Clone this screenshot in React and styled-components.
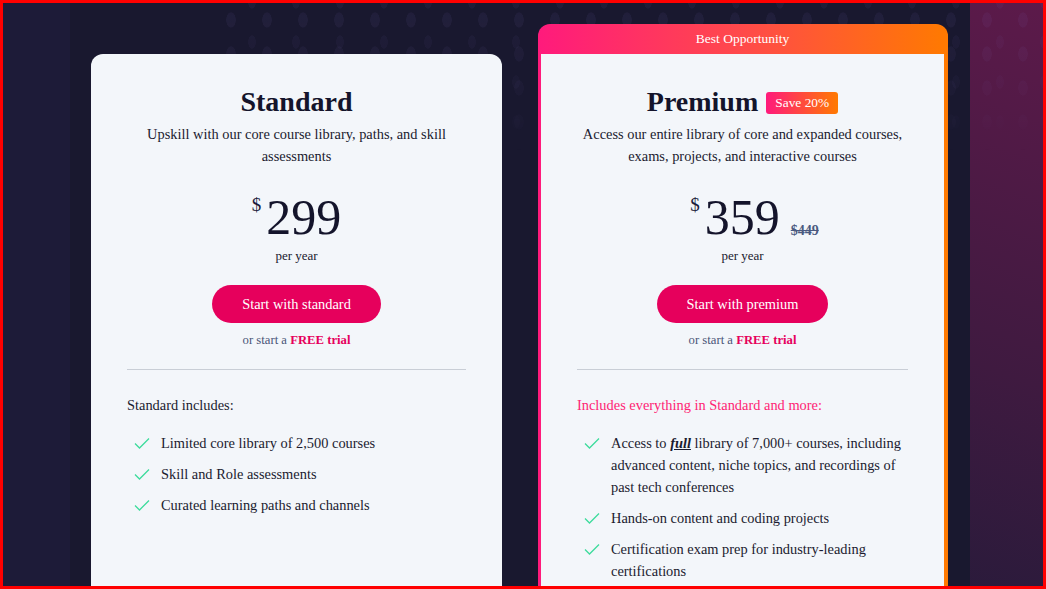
import React from 'react';
import styled, { createGlobalStyle } from 'styled-components';

const GlobalStyle = createGlobalStyle`
  html, body {
    margin: 0;
    padding: 0;
    height: 100%;
  }
  body {
    font-family: "Liberation Serif", "Times New Roman", serif;
    color: #1a1a2e;
  }
  * { box-sizing: border-box; }
`;

const Page = styled.div`
  position: relative;
  width: 100vw;
  height: 100vh;
  overflow: hidden;
  border: 3px solid #ff0000;
  background:
    linear-gradient(to right, #1d1b38 0 67px, #19182f 67px 967px, transparent 967px),
    linear-gradient(200deg, #5c1a4a 0%, #3f1a40 40%, #1d1b38 80%);
`;

const Dots = styled.div`
  position: absolute;
  top: 0;
  left: 210px;
  width: 830px;
  height: 150px;
  background-image:
    radial-gradient(ellipse 5px 8px, rgba(130, 110, 190, 0.09) 90%, transparent 100%),
    radial-gradient(ellipse 4px 7px, rgba(130, 110, 190, 0.07) 90%, transparent 100%);
  background-size: 36px 34px, 44px 40px;
  background-position: 0 0, 17px 19px;
  -webkit-mask-image: linear-gradient(to bottom, #000 0%, rgba(0, 0, 0, 0.6) 50%, transparent 100%);
  mask-image: linear-gradient(to bottom, #000 0%, rgba(0, 0, 0, 0.6) 50%, transparent 100%);
`;

const Cards = styled.div`
  position: relative;
  display: flex;
  align-items: flex-start;
  gap: 36px;
  padding: 21px 0 0 88px;
`;

const Card = styled.div`
  width: 411px;
  margin-top: 30px;
  background: #f3f6fa;
  border-radius: 12px;
  padding: 31px 36px 40px;
  min-height: 600px;
`;

const FeaturedFrame = styled.div`
  width: 410px;
  border-radius: 12px 12px 0 0;
  background: linear-gradient(to right, #ff1a7c, #ff4a4a 50%, #ff7a00);
  padding: 0 4px 0 3px;
`;

const Ribbon = styled.div`
  height: 30px;
  display: flex;
  align-items: center;
  justify-content: center;
  color: #fff;
  font-size: 13.5px;
`;

const FeaturedBody = styled.div`
  background: #f3f6fa;
  padding: 31px 36px 40px;
  min-height: 600px;
`;

const TitleRow = styled.div`
  display: flex;
  align-items: center;
  justify-content: center;
  gap: 8px;
`;

const Title = styled.h2`
  margin: 0;
  font-size: 28px;
  line-height: 34px;
  font-weight: bold;
  color: #14142b;
`;

const Badge = styled.span`
  display: inline-flex;
  align-items: center;
  height: 22px;
  margin-top: 2px;
  padding: 0 9px;
  border-radius: 3px;
  background: linear-gradient(to right, #ff1a7c, #ff7a00);
  color: #fff;
  font-size: 13.4px;
`;

const Description = styled.p`
  margin: 4px 0 0;
  font-size: 14.4px;
  line-height: 22px;
  text-align: center;
  color: #1b1b2f;
`;

const PriceRow = styled.div`
  display: flex;
  justify-content: center;
  align-items: flex-start;
  margin-top: 25px;
  height: 50px;
`;

const Currency = styled.span`
  font-size: 19px;
  line-height: 1;
  margin-top: 3px;
  margin-right: 5px;
  color: #1b1b3a;
`;

const Amount = styled.span`
  font-size: 50px;
  line-height: 50px;
  color: #14142b;
`;

const OldPrice = styled.span`
  align-self: flex-end;
  margin-left: 11px;
  margin-right: -24px;
  margin-bottom: 3px;
  font-size: 14px;
  font-weight: bold;
  color: #4b5a80;
  text-decoration: line-through;
`;

const Period = styled.div`
  margin-top: 5px;
  text-align: center;
  font-size: 13px;
  line-height: 18px;
`;

const ButtonWrap = styled.div`
  display: flex;
  justify-content: center;
  margin-top: 20px;
`;

const Button = styled.button`
  height: 38px;
  padding: 0 30px;
  border: none;
  border-radius: 19px;
  background: #e6005c;
  color: #fff;
  font-family: inherit;
  font-size: 14.4px;
  cursor: pointer;
`;

const Trial = styled.div`
  margin-top: 8px;
  text-align: center;
  font-size: 12.7px;
  line-height: 18px;
  color: #4a5578;

  strong {
    color: #e6005c;
  }
`;

const Divider = styled.hr`
  margin: 20px 0 0;
  border: none;
  border-top: 1px solid #c9ced6;
`;

const IncludesTitle = styled.div`
  margin-top: 25px;
  font-size: 14.4px;
  line-height: 20px;
  color: ${(p) => (p.$accent ? '#ff2474' : '#1b1b2f')};
`;

const List = styled.ul`
  list-style: none;
  margin: 17px 0 0;
  padding: 0 0 0 7px;
  display: flex;
  flex-direction: column;
  gap: 9px;
`;

const Item = styled.li`
  display: flex;
  align-items: flex-start;
  gap: 11px;
  font-size: 14.4px;
  line-height: 22px;
  color: #1b1b2f;

  b {
    font-style: italic;
    text-decoration: underline;
  }
`;

const CheckIcon = styled.svg`
  flex: 0 0 auto;
  width: 16px;
  height: 22px;
`;

const Check = () => (
  <CheckIcon viewBox="0 0 16 22">
    <polyline points="1,11.5 5.5,16 15,6.5" fill="none" stroke="#3ddc9c" strokeWidth="1.3" />
  </CheckIcon>
);

const standardItems = [
  'Limited core library of 2,500 courses',
  'Skill and Role assessments',
  'Curated learning paths and channels',
];

const premiumItems = [
  <>Access to <b>full</b> library of 7,000+ courses, including advanced content, niche topics, and recordings of past tech conferences</>,
  'Hands-on content and coding projects',
  'Certification exam prep for industry-leading certifications',
];

const PlanContent = ({ title, badge, description, price, oldPrice, cta, includes, accent, items }) => (
  <>
    <TitleRow>
      <Title>{title}</Title>
      {badge && <Badge>{badge}</Badge>}
    </TitleRow>
    <Description>{description}</Description>
    <PriceRow>
      <Currency>$</Currency>
      <Amount>{price}</Amount>
      {oldPrice && <OldPrice>{oldPrice}</OldPrice>}
    </PriceRow>
    <Period>per year</Period>
    <ButtonWrap>
      <Button>{cta}</Button>
    </ButtonWrap>
    <Trial>
      or start a <strong>FREE trial</strong>
    </Trial>
    <Divider />
    <IncludesTitle $accent={accent}>{includes}</IncludesTitle>
    <List>
      {items.map((item, i) => (
        <Item key={i}>
          <Check />
          <span>{item}</span>
        </Item>
      ))}
    </List>
  </>
);

export default function App() {
  return (
    <>
      <GlobalStyle />
      <Page>
        <Dots />
        <Cards>
          <Card>
            <PlanContent
              title="Standard"
              description="Upskill with our core course library, paths, and skill assessments"
              price="299"
              cta="Start with standard"
              includes="Standard includes:"
              items={standardItems}
            />
          </Card>
          <FeaturedFrame>
            <Ribbon>Best Opportunity</Ribbon>
            <FeaturedBody>
              <PlanContent
                title="Premium"
                badge="Save 20%"
                description="Access our entire library of core and expanded courses, exams, projects, and interactive courses"
                price="359"
                oldPrice="$449"
                cta="Start with premium"
                includes="Includes everything in Standard and more:"
                accent
                items={premiumItems}
              />
            </FeaturedBody>
          </FeaturedFrame>
        </Cards>
      </Page>
    </>
  );
}
